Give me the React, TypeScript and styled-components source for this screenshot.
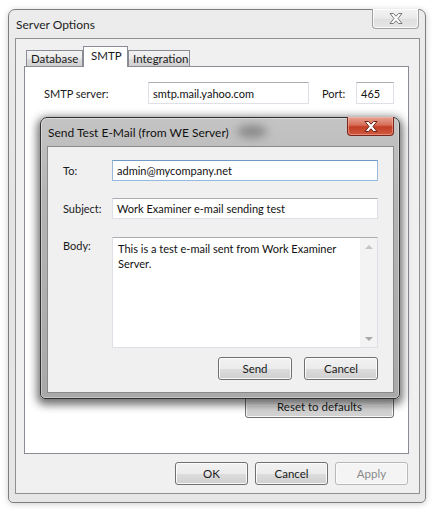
import React from 'react';
import styled, { createGlobalStyle } from 'styled-components';

const Global = createGlobalStyle`
  html, body { margin: 0; padding: 0; background: #fff; }
  body { font-family: Lato, "Noto Sans", sans-serif; font-size: 11px; color: #000; }
  * { box-sizing: border-box; }
`;

const Desktop = styled.div`
  width: 434px;
  height: 509px;
  padding: 9px 0 0 8px;
  overflow: hidden;
`;

const Window = styled.div`
  position: relative;
  width: 418px;
  height: 494px;
  border: 1px solid #7d7d7d;
  border-radius: 7px 7px 5px 5px;
  background: linear-gradient(#ececec, #e4e4e4 40%, #e6e6e6);
  box-shadow: 0 1px 6px rgba(0, 0, 0, 0.2);
  padding: 0 5px 8px 6px;
  display: flex;
  flex-direction: column;
`;

const TitleBar = styled.div`
  height: 28px;
  display: flex;
  align-items: center;
  justify-content: space-between;
  padding-left: 1px;
`;

const TitleText = styled.span`
  font-size: 12px;
  color: #1e1e1e;
  padding-top: 1px;
`;

const CloseButton = styled.div<{ $active?: boolean }>`
  align-self: flex-start;
  margin-top: -1px;
  margin-right: ${(p) => (p.$active ? 0 : 1)}px;
  width: 47px;
  height: ${(p) => (p.$active ? 19 : 20)}px;
  border: 1px solid ${(p) => (p.$active ? '#7a261a' : '#a2a2a2')};
  border-top: none;
  border-radius: 0 0 4px 4px;
  background: ${(p) =>
    p.$active
      ? 'linear-gradient(#e7a595, #d66c57 45%, #c23d25 55%, #d05a40)'
      : 'linear-gradient(#f4f4f4, #e9e9e9 50%, #dedede 51%, #e6e6e6)'};
  box-shadow: inset 0 0 0 1px ${(p) => (p.$active ? 'rgba(255,200,190,0.45)' : 'rgba(255,255,255,0.8)')};
  display: flex;
  align-items: center;
  justify-content: center;
`;

const XGlyph = ({ stroke, fill }: { stroke: string; fill: string }) => (
  <svg width="14" height="11" viewBox="0 0 14 11">
    <polygon
      points="1,0.5 4.5,0.5 7,3.2 9.5,0.5 13,0.5 9,5.5 13,10.5 9.5,10.5 7,7.8 4.5,10.5 1,10.5 5,5.5"
      fill={fill}
      stroke={stroke}
      strokeWidth="1"
      strokeLinejoin="round"
    />
  </svg>
);

const Client = styled.div`
  flex: 1;
  border: 1px solid #8f9090;
  background: #f0f0f0;
  padding: 8px 10px 7px 8px;
  display: flex;
  flex-direction: column;
`;

const TabStrip = styled.div`
  height: 20px;
  display: flex;
  align-items: flex-end;
  padding-left: 2px;
  margin-bottom: -1px;
  position: relative;
  z-index: 1;
`;

const Tab = styled.div<{ $selected?: boolean; $w: number }>`
  width: ${(p) => p.$w}px;
  height: ${(p) => (p.$selected ? 21 : 17)}px;
  border: 1px solid #898c95;
  border-bottom: ${(p) => (p.$selected ? 'none' : '1px solid #898c95')};
  background: ${(p) =>
    p.$selected ? '#fff' : 'linear-gradient(#f2f2f2, #ebebeb 50%, #dddddd 51%, #cfcfcf)'};
  padding: ${(p) => (p.$selected ? '2px 0 0 7px' : '0 0 0 4px')};
  display: flex;
  align-items: ${(p) => (p.$selected ? 'flex-start' : 'center')};
  font-size: 11.5px;
  color: #1a1a1a;
`;

const Panel = styled.div`
  height: 388px;
  border: 1px solid #898c95;
  background: #fff;
  padding: 15px 0 0 19px;
  display: flex;
  flex-direction: column;
`;

const FieldRow = styled.div`
  display: flex;
  align-items: center;
  height: 22px;
`;

const Label = styled.span<{ $w: number }>`
  width: ${(p) => p.$w}px;
  flex-shrink: 0;
  color: #1a1a1a;
  font-size: 11px;
`;

const TextBox = styled.div<{ $w: number; $h: number; $focused?: boolean }>`
  width: ${(p) => p.$w}px;
  height: ${(p) => p.$h}px;
  flex-shrink: 0;
  border: 1px solid ${(p) => (p.$focused ? '#99b9da' : '#dde1e7')};
  border-top-color: ${(p) => (p.$focused ? '#6f9ac6' : '#abadb3')};
  background: #fff;
  padding: 0 4px;
  display: flex;
  align-items: center;
  color: #111;
  font-size: 11px;
  white-space: nowrap;
`;

const Gap = styled.span<{ $w: number }>`
  width: ${(p) => p.$w}px;
  flex-shrink: 0;
`;

const Button = styled.div<{ $w: number; $h?: number; $disabled?: boolean }>`
  width: ${(p) => p.$w}px;
  height: ${(p) => p.$h ?? 23}px;
  flex-shrink: 0;
  border: 1px solid ${(p) => (p.$disabled ? '#b8b8b8' : '#707070')};
  border-radius: 3px;
  background: ${(p) =>
    p.$disabled ? '#f4f4f4' : 'linear-gradient(#f2f2f2, #ebebeb 50%, #dddddd 51%, #cfcfcf)'};
  box-shadow: inset 0 0 0 1px ${(p) => (p.$disabled ? '#fbfbfb' : 'rgba(255,255,255,0.85)')};
  color: ${(p) => (p.$disabled ? '#8a8a8a' : '#1a1a1a')};
  display: flex;
  align-items: center;
  justify-content: center;
  font-size: 11.5px;
`;

const ResetButton = styled(Button)`
  align-self: flex-end;
  margin-right: 14px;
  margin-top: 290px;
`;

const ButtonRow = styled.div<{ $gap: number; $mt: number }>`
  display: flex;
  justify-content: flex-end;
  gap: ${(p) => p.$gap}px;
  margin-top: ${(p) => p.$mt}px;
  padding-right: 1px;
`;

const Dialog = styled.div`
  position: absolute;
  left: 31px;
  top: 107px;
  width: 360px;
  height: 282px;
  border: 1px solid #303030;
  border-radius: 7px 7px 5px 5px;
  background: linear-gradient(#c4c4c4, #b4b4b4 30%, #a9a9a9);
  box-shadow: 0 3px 9px 3px rgba(0, 0, 0, 0.55), inset 0 0 0 1px rgba(255, 255, 255, 0.35);
  padding: 0 5px 5px 6px;
  display: flex;
  flex-direction: column;
  z-index: 2;
`;

const DialogTitleBar = styled(TitleBar)`
  position: relative;
`;

const TitleSmudge = styled.div`
  position: absolute;
  left: 190px;
  top: 7px;
  width: 30px;
  height: 13px;
  border-radius: 50%;
  background: rgba(70, 70, 70, 0.45);
  filter: blur(4px);
`;

const DialogTitle = styled(TitleText)`
  position: relative;
  color: #111;
`;

const DialogClient = styled.div`
  flex: 1;
  border: 1px solid #8a8a8a;
  background: #f0f0f0;
  padding: 13px 14px 12px 15px;
  display: flex;
  flex-direction: column;
`;

const FormRow = styled.div<{ $mt: number; $top?: boolean }>`
  display: flex;
  align-items: ${(p) => (p.$top ? 'flex-start' : 'center')};
  margin-top: ${(p) => p.$mt}px;
`;

const BodyLabel = styled(Label)`
  padding-top: 2px;
`;

const TextArea = styled.div`
  width: 266px;
  height: 111px;
  border: 1px solid #dde1e7;
  border-top-color: #abadb3;
  background: #fff;
  display: flex;
`;

const TextAreaText = styled.div`
  flex: 1;
  padding: 3px 4px 2px 5px;
  line-height: 15px;
  font-size: 11px;
  color: #111;
`;

const ScrollBar = styled.div`
  width: 17px;
  background: #f3f3f3;
  display: flex;
  flex-direction: column;
  justify-content: space-between;
  align-items: center;
  padding: 7px 0 6px;
`;

const Arrow = styled.div<{ $down?: boolean }>`
  width: 0;
  height: 0;
  border-left: 4px solid transparent;
  border-right: 4px solid transparent;
  ${(p) => (p.$down ? 'border-top: 4px solid #a8a8a8;' : 'border-bottom: 4px solid #c4c4c4;')}
`;

export default function App() {
  return (
    <>
      <Global />
      <Desktop>
        <Window>
          <TitleBar>
            <TitleText>Server Options</TitleText>
            <CloseButton>
              <XGlyph fill="#fafafa" stroke="#7a7a7a" />
            </CloseButton>
          </TitleBar>
          <Client>
            <TabStrip>
              <Tab $w={57}>Database</Tab>
              <Tab $w={45} $selected>SMTP</Tab>
              <Tab $w={62}>Integration</Tab>
            </TabStrip>
            <Panel>
              <FieldRow>
                <Label $w={104}>SMTP server:</Label>
                <TextBox $w={161} $h={22}>smtp.mail.yahoo.com</TextBox>
                <Gap $w={13} />
                <Label $w={34}>Port:</Label>
                <TextBox $w={38} $h={22}>465</TextBox>
              </FieldRow>
              <ResetButton $w={149} $h={24}>Reset to defaults</ResetButton>
            </Panel>
            <ButtonRow $gap={7} $mt={8}>
              <Button $w={73}>OK</Button>
              <Button $w={73}>Cancel</Button>
              <Button $w={73} $disabled>Apply</Button>
            </ButtonRow>
          </Client>

          <Dialog>
            <DialogTitleBar>
              <TitleSmudge />
              <DialogTitle>Send Test E-Mail (from WE Server)</DialogTitle>
              <CloseButton $active>
                <XGlyph fill="#ffffff" stroke="#6b2216" />
              </CloseButton>
            </DialogTitleBar>
            <DialogClient>
              <FormRow $mt={0}>
                <Label $w={49}>To:</Label>
                <TextBox $w={266} $h={21} $focused>admin@mycompany.net</TextBox>
              </FormRow>
              <FormRow $mt={17}>
                <Label $w={49}>Subject:</Label>
                <TextBox $w={266} $h={21}>Work Examiner e-mail sending test</TextBox>
              </FormRow>
              <FormRow $mt={18} $top>
                <BodyLabel $w={49}>Body:</BodyLabel>
                <TextArea>
                  <TextAreaText>
                    This is a test e-mail sent from Work Examiner Server.
                  </TextAreaText>
                  <ScrollBar>
                    <Arrow />
                    <Arrow $down />
                  </ScrollBar>
                </TextArea>
              </FormRow>
              <ButtonRow $gap={12} $mt={9}>
                <Button $w={74}>Send</Button>
                <Button $w={74}>Cancel</Button>
              </ButtonRow>
            </DialogClient>
          </Dialog>
        </Window>
      </Desktop>
    </>
  );
}
